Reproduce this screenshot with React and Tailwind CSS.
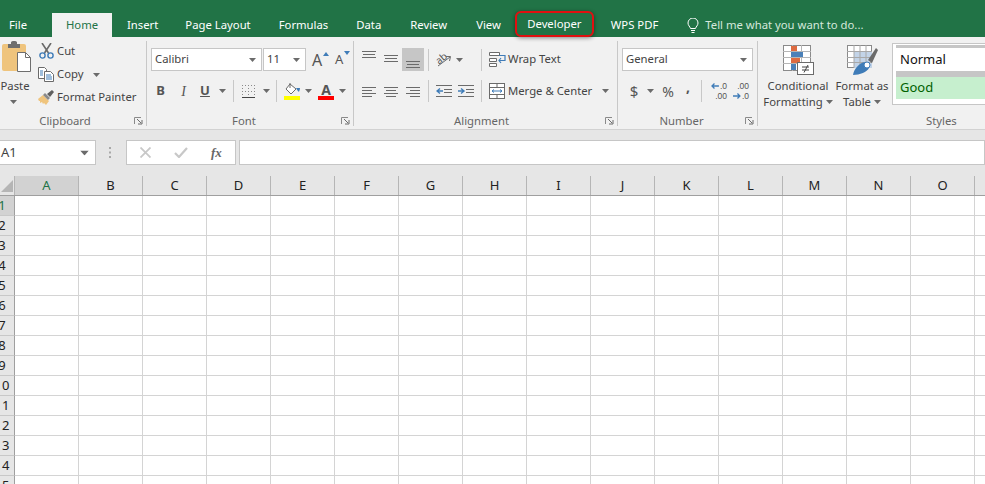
import React from "react";

const columns = ["A", "B", "C", "D", "E", "F", "G", "H", "I", "J", "K", "L", "M", "N", "O", "P"];
const rows = [1, 2, 3, 4, 5, 6, 7, 8, 9, 10, 11, 12, 13, 14, 15];

const Caret = ({ className = "" }) => (
  <svg width="7" height="4" viewBox="0 0 7 4" className={`shrink-0 ${className}`}>
    <path d="M0 0h7L3.5 4z" fill="#6b6b6b" />
  </svg>
);

const Sep = ({ className = "" }) => <div className={`w-px h-[22px] bg-[#c8c8c8] shrink-0 ${className}`} />;

const Launcher = () => (
  <svg width="9" height="8" viewBox="0 0 9 8" className="absolute right-[3px] bottom-[1px]">
    <path d="M.5 7V.5H7" fill="none" stroke="#8a8a8a" />
    <path d="M3 2l4 4M8 3v4H4" fill="none" stroke="#6b6b6b" />
  </svg>
);

const Group = ({ label, className = "", children }) => (
  <div className={`relative h-[85px] shrink-0 flex flex-col border-r border-[#c8c8c8] ${className}`}>
    <div className="flex-1 min-h-0">{children}</div>
    <div className="h-[15px] -mb-[2px] pr-4 text-center leading-[15px] text-[#666]">{label}</div>
    <Launcher />
  </div>
);

const PasteIcon = () => (
  <svg width="29" height="32" viewBox="0 0 29 32">
    <rect x="0" y="3" width="24" height="27" rx="2" fill="#efc47d" />
    <path d="M6 3h3V1.500C9 .5 10 0 12 0s3 .5 3 1.500V3h3v4H6z" fill="#6e6e6e" />
    <path d="M15.500 11.500h8l5 5v14h-13z" fill="#fff" stroke="#6e6e6e" />
    <path d="M23.500 11.500v5h5" fill="none" stroke="#6e6e6e" />
  </svg>
);

const CutIcon = () => (
  <svg width="15" height="16" viewBox="0 0 15 16">
    <path d="M3 0l6.500 10M12 0L5.500 10" stroke="#6a6a6a" strokeWidth="1.600" fill="none" />
    <circle cx="3.500" cy="12.500" r="2.600" fill="none" stroke="#3f7cb8" strokeWidth="1.400" />
    <circle cx="11.500" cy="12.500" r="2.600" fill="none" stroke="#3f7cb8" strokeWidth="1.400" />
  </svg>
);

const CopyIcon = () => (
  <svg width="16" height="15" viewBox="0 0 16 15">
    <path d="M.5 .5h6l2 2v9H.5z" fill="#fff" stroke="#6a6a6a" />
    <path d="M6.500 4.500h6l3 3v7h-9z" fill="#fff" stroke="#6a6a6a" />
    <path d="M8 8h5M8 10h6M8 12h6M2 4h3M2 6h3M2 8h3" stroke="#3f7cb8" />
  </svg>
);

const PainterIcon = () => (
  <svg width="16" height="15" viewBox="0 0 16 15">
    <path d="M0 9l5-4 6 6-3 4-2-2-1 1-1-2-2 1 0-2-1 0z" fill="#efc47d" />
    <path d="M5 5l2-2 5 5-2 2z" fill="#8a8a8a" />
    <path d="M9 4l5-4 2 2-4 5z" fill="#5f5f5f" />
  </svg>
);

const Lines = ({ rows: lineRows, className = "" }) => (
  <svg width="14" height="11" viewBox="0 0 14 11" className={`shrink-0 ${className}`}>
    {lineRows.map((l, i) => (
      <rect key={i} x={l[0]} y={i * 3 + 1} width={l[1]} height="1" fill="#6b6b6b" />
    ))}
  </svg>
);

const Indent = ({ flip }) => (
  <svg width="16" height="12" viewBox="0 0 16 12" className="shrink-0 block">
    <path d="M0 .5h16M8 4.500h8M8 7.500h8M0 11.500h16" stroke="#6b6b6b" />
    {flip ? (
      <path d="M0 6h5M3 3.500L6 6 3 8.500" stroke="#3f7cb8" strokeWidth="1.400" fill="none" />
    ) : (
      <path d="M1 6h6M4 3.500L1 6l3 2.500" stroke="#3f7cb8" strokeWidth="1.400" fill="none" />
    )}
  </svg>
);

const DecimalIcon = ({ more }) => (
  <div className="w-[16px] flex flex-col text-[8.500px] leading-[10px] text-[#555] shrink-0 font-['Liberation_Sans',sans-serif]">
    {more ? (
      <>
        <div className="flex justify-end">.00</div>
        <div className="flex items-center justify-end gap-px">
          <svg width="8" height="6" viewBox="0 0 8 6"><path d="M0 3h7M4.500 .5L7 3 4.500 5.500" stroke="#3f7cb8" strokeWidth="1.300" fill="none" /></svg>
          .0
        </div>
      </>
    ) : (
      <>
        <div className="flex items-center justify-end gap-px">
          <svg width="8" height="6" viewBox="0 0 8 6"><path d="M8 3H1M3.500 .5L1 3l2.500 2.500" stroke="#3f7cb8" strokeWidth="1.300" fill="none" /></svg>
          .0
        </div>
        <div className="flex justify-end">.00</div>
      </>
    )}
  </div>
);

const CondFormatIcon = () => (
  <svg width="31" height="30" viewBox="0 0 31 30" className="block">
    <rect x=".5" y=".5" width="27" height="25" fill="#fff" stroke="#8a8a8a" />
    <path d="M9.500 0v26M18.500 0v26M0 6.500h28M0 12.500h28M0 18.500h28" stroke="#b5b5b5" />
    <rect x="8" y="1" width="6" height="5" fill="#dd6b41" />
    <rect x="8" y="7" width="12" height="5" fill="#4a80b8" />
    <rect x="8" y="13" width="9" height="5" fill="#dd6b41" />
    <rect x="8" y="19" width="5" height="6" fill="#4a80b8" />
    <rect x="14.500" y="17.500" width="16" height="12" fill="#fff" stroke="#6b6b6b" />
    <path d="M19 22h7M19 25h7M25 20l-4 7.500" stroke="#444" fill="none" />
  </svg>
);

const FormatTableIcon = () => (
  <svg width="31" height="30" viewBox="0 0 31 30" className="block">
    <rect x=".5" y=".5" width="24" height="22" fill="#fff" stroke="#8a8a8a" />
    <rect x="7" y="6" width="18" height="17" fill="#c3d4e8" />
    <path d="M7 0v23M13 0v23M19 0v23M0 6.500h25M0 12.500h25M0 17.500h25" stroke="#a8a8a8" />
    <path d="M21 15L29 3l2 2-6 13z" fill="#6b6b6b" />
    <path d="M6 30c1-6 6-12 12-13 4 0 6 3 4 6-2 4-9 7-16 7z" fill="#3f7cb8" />
    <circle cx="20" cy="20" r="3" fill="#fff" stroke="#3f7cb8" />
  </svg>
);

const App = () => {
  return (
    <div className="w-[985px] h-[484px] overflow-hidden bg-white font-['Noto_Sans',sans-serif] text-[#444]">
      {/* title + tabs */}
      <div className="relative h-[37px] bg-[#217346] pt-[13px] text-[11.300px] text-white">
        <div className="absolute left-[755px] top-[-15px] text-[11.300px] leading-[17px] text-[#d8e8de] whitespace-nowrap">(Product Activation Failed)</div>
        <div className="flex h-[24px] items-center">
          <div className="pl-[9px] w-[52px]">File</div>
          <div className="h-full w-[60px] flex items-center justify-center bg-[#f1f1f1] text-[#217346]">Home</div>
          <div className="ml-[15px]">Insert</div>
          <div className="ml-[27px]">Page Layout</div>
          <div className="ml-[28px]">Formulas</div>
          <div className="ml-[28px]">Data</div>
          <div className="ml-[29px]">Review</div>
          <div className="ml-[29px]">View</div>
          <div className="ml-[14px] h-[26px] -mt-[2px] w-[79px] flex items-center justify-center rounded-[6px] border-2 border-[#e01010] shadow-[0_1px_4px_rgba(0,0,0,0.45)]">Developer</div>
          <div className="ml-[17px]">WPS PDF</div>
          <svg width="12" height="15" viewBox="0 0 12 15" className="ml-[29px]">
            <path d="M3.500 10.500C3 8.500 1 7.500 1 5a5 5 0 0 1 10 0c0 2.500-2 3.500-2.500 5.500zM4 12.500h4M4.500 14.500h3" fill="none" stroke="#fff" />
          </svg>
          <div className="ml-[6px] text-[#d5e8dc]">Tell me what you want to do...</div>
        </div>
      </div>

      {/* ribbon */}
      <div className="h-[93px] bg-[#f1f1f1] border-b border-[#d2d2d2] pt-[4px] flex overflow-hidden text-[11.300px]">
        <Group label="Clipboard" className="ml-[-10px] w-[157px] pl-[10px]">
          <div className="flex">
            <div className="w-[38px] flex flex-col">
              <div className="ml-[2px] h-[36px]"><PasteIcon /></div>
              <div className="leading-[17px] w-[30px] text-center">Paste</div>
              <Caret className="ml-[10px] mt-[6px]" />
            </div>
            <div className="flex flex-col -mt-[2px]">
              <div className="h-[24px] flex items-center gap-[3px]">
                <div className="w-[16px] flex justify-center"><CutIcon /></div>Cut
              </div>
              <div className="h-[23px] flex items-center gap-[3px]">
                <div className="w-[16px]"><CopyIcon /></div>Copy<Caret className="ml-[7px]" />
              </div>
              <div className="h-[23px] flex items-center gap-[3px]">
                <div className="w-[16px]"><PainterIcon /></div>Format Painter
              </div>
            </div>
          </div>
        </Group>

        <Group label="Font" className="w-[207px] pl-[4px]">
          <div className="pt-[7px] flex items-center h-[30px]">
            <div className="w-[111px] h-[23px] bg-white border border-[#c6c6c6] flex items-center justify-between pl-[3px] pr-[5px]">
              Calibri<Caret />
            </div>
            <div className="ml-px w-[43px] h-[23px] bg-white border border-[#c6c6c6] flex items-center justify-between pl-[3px] pr-[5px]">
              11<Caret />
            </div>
            <div className="ml-[6px] w-[15px] relative text-[16px] leading-none text-[#555]">
              A
              <svg width="6" height="4" viewBox="0 0 6 4" className="absolute right-[-2px] top-0"><path d="M3 0l3 4H0z" fill="#3f7cb8" /></svg>
            </div>
            <div className="ml-[8px] w-[12px] relative text-[13px] leading-none text-[#555]">
              A
              <svg width="6" height="4" viewBox="0 0 6 4" className="absolute right-[-3px] top-[-2px]"><path d="M0 0h6L3 4z" fill="#3f7cb8" /></svg>
            </div>
          </div>
          <div className="mt-[9px] h-[22px] flex items-center">
            <div className="w-[19px] text-center font-bold text-[13px] text-[#555]">B</div>
            <div className="ml-[3px] w-[21px] text-center italic text-[14px] font-['Liberation_Serif',serif] text-[#555]">I</div>
            <div className="ml-px w-[20px] text-center font-bold text-[13px] text-[#555] underline">U</div>
            <Caret className="ml-[4px]" />
            <Sep className="ml-[7px]" />
            <svg width="13" height="13" viewBox="0 0 13 13" className="ml-[8px]">
              <path d="M0 .5h13M0 6.500h13M.5 0v13M6.500 0v13M12.500 0v13" stroke="#8a8a8a" strokeDasharray="1 2" fill="none" />
              <path d="M0 12.500h13" stroke="#444" />
            </svg>
            <Caret className="ml-[8px]" />
            <Sep className="ml-[6px]" />
            <div className="ml-[7px] w-[16px]">
              <svg width="16" height="13" viewBox="0 0 16 13" className="block">
                <path d="M6 1l6 5-5 5-5-5z" fill="#fff" stroke="#6b6b6b" />
                <path d="M6 0v5" stroke="#6b6b6b" />
                <path d="M12 5l4 0c0 2-1 3-1 4-1-1-2-2-3-4z" fill="#3f7cb8" />
              </svg>
              <div className="h-[4px] bg-[#ffff00]" />
            </div>
            <Caret className="ml-[5px]" />
            <div className="ml-[6px] w-[16px] flex flex-col items-center">
              <div className="text-[14px] font-bold leading-[13px] text-[#555]">A</div>
              <div className="h-[4px] w-full bg-[#ff0000]" />
            </div>
            <Caret className="ml-[5px]" />
          </div>
        </Group>

        <Group label="Alignment" className="w-[264px] pl-[8px]">
          <div className="pt-[7px] flex items-center h-[30px]">
            <Lines rows={[[0, 14], [1, 12], [0, 14]]} className="self-start mt-[2px]" />
            <Lines rows={[[0, 14], [1, 12], [0, 14]]} className="ml-[8px]" />
            <div className="ml-[4px] w-[22px] h-[23px] bg-[#c6c6c6] flex items-end justify-center">
              <Lines rows={[[0, 14], [1, 12], [0, 14]]} />
            </div>
            <Sep className="ml-[4px]" />
            <div className="ml-[6px] w-[17px] h-[16px] relative">
              <div className="rotate-[-40deg] text-[10px] leading-[12px] text-[#555] w-[12px] text-center">ab</div>
              <svg width="17" height="16" viewBox="0 0 17 16" className="absolute left-0 top-0">
                <path d="M3 14L15 5M11 4.500l4.500 0-1 4.500" fill="none" stroke="#6b6b6b" />
              </svg>
            </div>
            <Caret className="ml-[4px]" />
            <Sep className="ml-[18px]" />
            <svg width="17" height="15" viewBox="0 0 17 15" className="ml-[7px]">
              <path d="M.5 .5h10v3H.5zM.5 6.500h7v3h-7zM.5 11.500h7v3h-7z" fill="#fff" stroke="#6b6b6b" />
              <path d="M10 3.500h6v5h-6M12 6l-2 2.500 2 2.500" fill="none" stroke="#3f7cb8" strokeWidth="1.200" />
            </svg>
            <span className="ml-[2px]">Wrap Text</span>
          </div>
          <div className="mt-[9px] h-[22px] flex items-center">
            <Lines rows={[[0, 14], [0, 10], [0, 14], [0, 10]]} />
            <Lines rows={[[0, 14], [2, 10], [0, 14], [2, 10]]} className="ml-[8px]" />
            <Lines rows={[[0, 14], [4, 10], [0, 14], [4, 10]]} className="ml-[8px]" />
            <Sep className="ml-[8px]" />
            <div className="ml-[7px]"><Indent /></div>
            <div className="ml-[6px]"><Indent flip /></div>
            <Sep className="ml-[7px]" />
            <svg width="17" height="16" viewBox="0 0 17 16" className="ml-[7px]">
              <rect x=".5" y=".5" width="15" height="15" fill="#fff" stroke="#6b6b6b" />
              <path d="M0 4.500h16M0 11.500h16M8 0v4M8 12v4" stroke="#6b6b6b" />
              <path d="M3 8h10M5 6.500L3 8l2 1.500M11 6.500L13 8l-2 1.500" stroke="#3f7cb8" fill="none" />
            </svg>
            <span className="ml-[2px]">Merge &amp; Center</span>
            <Caret className="ml-[10px]" />
          </div>
        </Group>

        <Group label="Number" className="w-[140px] pl-[4px]">
          <div className="pt-[7px] flex items-center h-[30px]">
            <div className="w-[131px] h-[23px] bg-white border border-[#c6c6c6] flex items-center justify-between pl-[3px] pr-[5px]">
              General<Caret />
            </div>
          </div>
          <div className="mt-[9px] h-[22px] flex items-center">
            <div className="ml-[7px] w-[10px] text-center text-[15px] text-[#555]">$</div>
            <Caret className="ml-[8px]" />
            <div className="ml-[7px] w-[14px] text-center text-[14px] text-[#555]">%</div>
            <div className="ml-[9px] w-[8px] text-center text-[14px] font-bold text-[#555] -mt-[9px]">,</div>
            <Sep className="ml-[9px]" />
            <div className="ml-[9px]"><DecimalIcon /></div>
            <div className="ml-[6px]"><DecimalIcon more /></div>
          </div>
        </Group>

        <div className="relative h-[85px] w-[400px] shrink-0 flex">
          <div className="w-[78px] ml-px flex flex-col items-center pt-[4px]">
            <div className="h-[33px]"><CondFormatIcon /></div>
            <div className="leading-[16px] text-center">Conditional</div>
            <div className="leading-[16px] flex items-center gap-[3px]">Formatting<Caret /></div>
          </div>
          <div className="w-[50px] flex flex-col items-center pt-[4px]">
            <div className="h-[33px]"><FormatTableIcon /></div>
            <div className="leading-[16px] text-center whitespace-nowrap">Format as</div>
            <div className="leading-[16px] flex items-center gap-[3px]">Table<Caret /></div>
          </div>
          <div className="ml-[5px] flex flex-col">
            <div className="mt-[2px] shrink-0 w-[120px] h-[62px] bg-white border-y border-l border-[#c6c6c6] flex flex-col">
              <div className="ml-[3px] mt-px shrink-0 border-t-[3px] border-b-[6px] border-[#c6c6c6] bg-white h-[32px] flex items-center pl-[4px] text-[13px] text-[#111]">Normal</div>
              <div className="ml-[3px] shrink-0 h-[22px] bg-[#c6efce] flex items-center pl-[4px] text-[13px] text-[#006100]">Good</div>
            </div>
            <div className="mt-[8px] shrink-0 ml-[34px] leading-[15px] text-[#666]">Styles</div>
          </div>
        </div>
      </div>

      {/* formula bar */}
      <div className="h-[46px] bg-[#e6e6e6] flex items-start pt-[10px]">
        <div className="w-[96px] h-[25px] bg-white border border-[#c6c6c6] border-l-0 flex items-center justify-between pl-px pr-[7px] text-[13px]">
          A1<Caret className="scale-125" />
        </div>
        <svg width="3" height="11" viewBox="0 0 3 11" className="ml-[13px] mt-[7px]">
          <path d="M0 0h2v2H0zM0 4.500h2v2H0zM0 9h2v2H0z" fill="#a8a8a8" />
        </svg>
        <div className="ml-[14px] w-[110px] h-[25px] bg-white border border-[#c6c6c6] flex items-center">
          <svg width="11" height="11" viewBox="0 0 11 11" className="ml-[13px]">
            <path d="M.5 .5l10 10M10.500 .5l-10 10" stroke="#c8c8c8" strokeWidth="1.800" />
          </svg>
          <svg width="14" height="11" viewBox="0 0 14 11" className="ml-[23px]">
            <path d="M1 6l4 4 8-9" stroke="#c8c8c8" strokeWidth="2.200" fill="none" />
          </svg>
          <span className="ml-[23px] italic font-bold text-[13px] font-['Liberation_Serif',serif] text-[#666]">fx</span>
        </div>
        <div className="ml-[3px] flex-1 h-[25px] bg-white border border-[#c6c6c6]" />
      </div>

      {/* sheet */}
      <div className="flex h-[20px] bg-[#e6e6e6] border-b border-[#9f9f9f] text-[13px] text-[#222]">
        <div className="w-[15px] shrink-0 border-r border-[#b5b5b5] pl-px pt-[4px]">
          <svg width="12" height="12" viewBox="0 0 12 12" className="block"><path d="M12 0v12H0z" fill="#b5b5b5" /></svg>
        </div>
        {columns.map((c, i) => (
          <div
            key={c}
            className={`w-[64px] shrink-0 border-r border-[#b5b5b5] flex items-center justify-center ${i === 0 ? "bg-[#d2d2d2] text-[#217346]" : ""}`}
          >
            {c !== "P" && c}
          </div>
        ))}
      </div>
      {rows.map((r) => (
        <div key={r} className="flex h-[20px] overflow-hidden">
          <div className={`w-[15px] shrink-0 overflow-hidden border-r border-b border-r-[#9f9f9f] border-b-[#c8c8c8] text-[13px] ${r === 1 ? "bg-[#d2d2d2] text-[#217346]" : "bg-[#e6e6e6] text-[#222]"}`}>
            <div className="ml-[-10px] w-[24px] text-center leading-[19px]">{r}</div>
          </div>
          {columns.map((c) => (
            <div key={c} className="w-[64px] shrink-0 border-r border-b border-[#d4d4d4]" />
          ))}
        </div>
      ))}
    </div>
  );
};

export default App;
